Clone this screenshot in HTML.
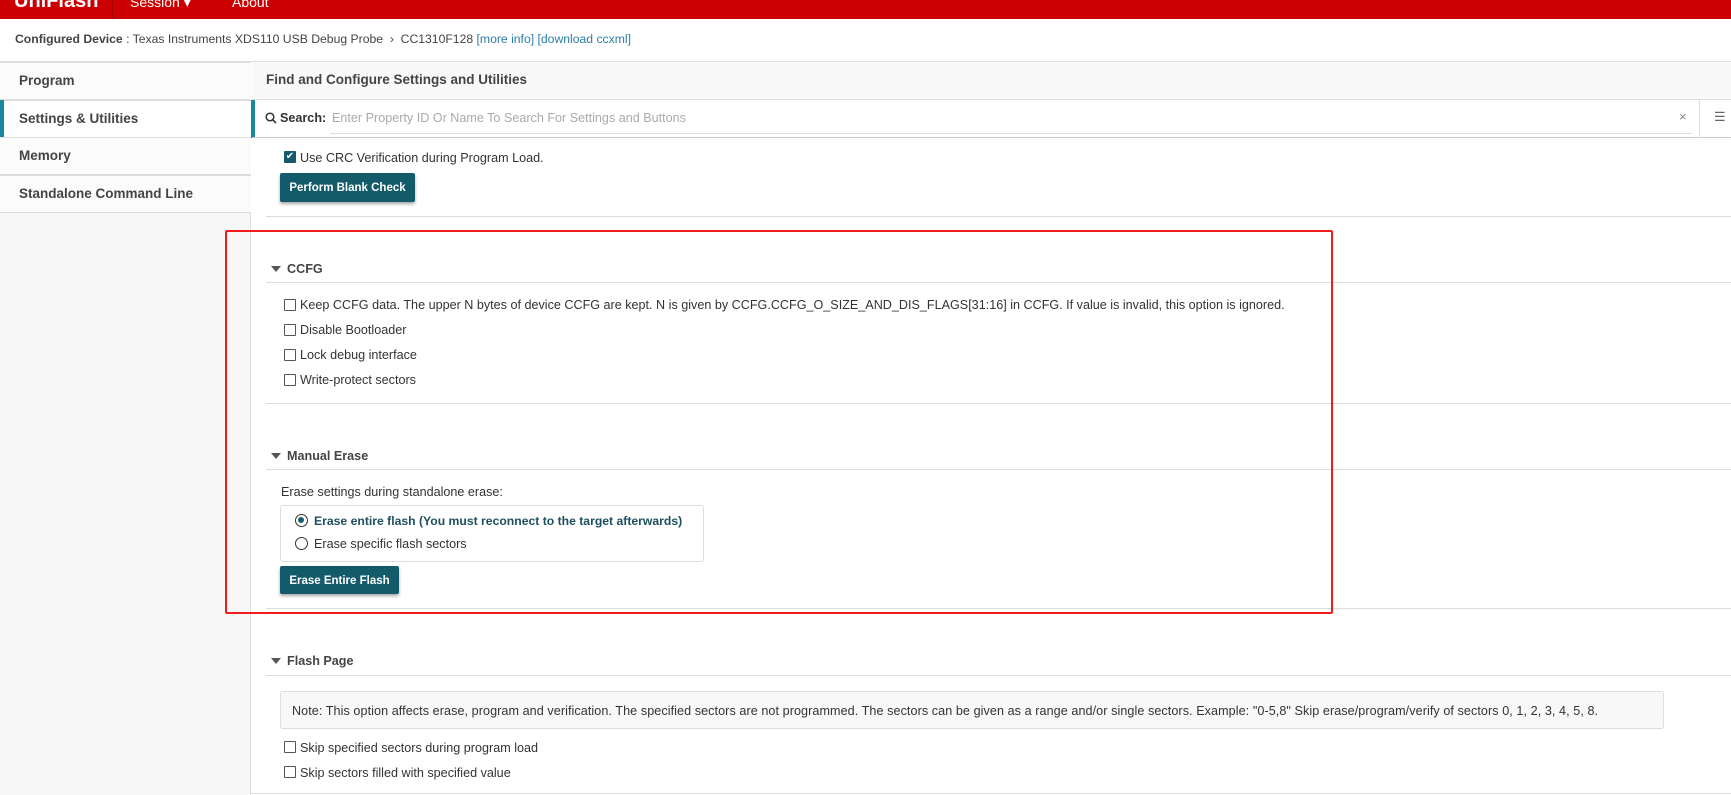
<!DOCTYPE html>
<html><head><meta charset="utf-8"><style>
*{box-sizing:border-box;margin:0;padding:0}
body{width:1731px;height:795px;overflow:hidden;background:#fff;font-family:"Liberation Sans",Arial,sans-serif;font-size:12.6px;color:#333;position:relative}
.a{position:absolute;white-space:nowrap}
.top{left:0;top:0;width:1731px;height:19px;background:#cc0000}
.side{left:0;top:62px;width:251px;height:733px;background:#f7f7f7;border-right:1px solid #ddd}
.row{left:0;width:251px;height:38px;background:#fbfbfb;border-bottom:1px solid #ddd;border-top:1px solid #ddd;padding:10px 0 0 19px;font-size:13.5px;font-weight:bold;color:#444}
.hr{height:1px;background:#ddd}
.cb{width:12px;height:12px;border:1px solid #555;border-radius:1px;background:#fff}
.btn{background:#135a6a;color:#fff;font-size:11.5px;font-weight:bold;border-radius:2px;box-shadow:0 2px 3px rgba(0,0,0,.35);text-align:center}
.h{font-size:12.6px;font-weight:bold;color:#444}
.tri{width:0;height:0;border-left:5px solid transparent;border-right:5px solid transparent;border-top:6px solid #555}
</style></head><body>
<div class="a top"></div>
<div class="a" style="left:14px;top:-10px;color:#fff;font-size:20px;font-weight:bold">UniFlash</div>
<div class="a" style="left:112px;top:0;width:1px;height:19px;background:#a00"></div>
<div class="a" style="left:130px;top:-6px;color:#fff;font-size:14px">Session ▾</div>
<div class="a" style="left:232px;top:-6px;color:#fff;font-size:14px">About</div>
<div class="a" style="left:15px;top:32px;font-size:12.2px;color:#444"><b>Configured Device</b> : Texas Instruments XDS110 USB Debug Probe &nbsp;›&nbsp; CC1310F128 <span style="color:#2a7fa8">[more info]</span> <span style="color:#2a7fa8">[download ccxml]</span></div>
<div class="a hr" style="left:0;top:61px;width:1731px"></div>
<div class="a side"></div>
<div class="a row" style="top:62px">Program</div>
<div class="a row" style="top:100px;background:#fff">Settings &amp; Utilities</div>
<div class="a" style="left:0;top:100px;width:4px;height:38px;background:#1a8a9a"></div>
<div class="a row" style="top:137px">Memory</div>
<div class="a row" style="top:175px">Standalone Command Line</div>
<div class="a" style="left:252px;top:62px;width:1479px;height:38px;background:#f9f9f9;border-bottom:1px solid #ddd"></div>
<div class="a" style="left:266px;top:72px;font-size:13.5px;font-weight:bold;color:#444">Find and Configure Settings and Utilities</div>
<div class="a" style="left:251px;top:100px;width:4px;height:38px;background:#1a8a9a"></div>
<div class="a" style="left:280px;top:128px;width:430px;height:8px;border:1px solid #ddd;border-top:none;border-radius:0 0 4px 4px"></div>
<div class="a" style="left:255px;top:101px;width:1444px;height:35px;background:#fff"></div>
<div class="a" style="left:252px;top:137px;width:1479px;height:1px;background:#ccc;box-shadow:0 2px 4px rgba(0,0,0,.08)"></div>
<svg class="a" style="left:265px;top:112px" width="12" height="12" viewBox="0 0 12 12"><circle cx="5" cy="5" r="3.8" fill="none" stroke="#333" stroke-width="1.5"/><line x1="7.8" y1="7.8" x2="11" y2="11" stroke="#333" stroke-width="1.6"/></svg>
<div class="a" style="left:280px;top:111px;font-weight:bold;color:#333">Search:</div>
<div class="a" style="left:332px;top:111px;color:#aaa">Enter Property ID Or Name To Search For Settings and Buttons</div>
<div class="a hr" style="left:330px;top:133px;width:1362px"></div>
<div class="a" style="left:1679px;top:109px;color:#888;font-size:13px">×</div>
<div class="a" style="left:1699px;top:100px;width:1px;height:38px;background:#ddd"></div>
<div class="a" style="left:1714px;top:109px;color:#666;font-size:13px">☰</div>
<div class="a cb" style="left:284px;top:151px;background:#135a6a;border-color:#135a6a;color:#fff;font-size:10px;line-height:10px;text-align:center">✔</div>
<div class="a" style="left:300px;top:151px">Use CRC Verification during Program Load.</div>
<div class="a btn" style="left:280px;top:173px;width:135px;height:29px;line-height:31px">Perform Blank Check</div>
<div class="a hr" style="left:266px;top:216px;width:1465px"></div>

<div class="a tri" style="left:271px;top:266px"></div>
<div class="a h" style="left:287px;top:262px">CCFG</div>
<div class="a hr" style="left:266px;top:282px;width:1465px"></div>
<div class="a cb" style="left:284px;top:299px"></div><div class="a" style="left:300px;top:298px">Keep CCFG data. The upper N bytes of device CCFG are kept. N is given by CCFG.CCFG_O_SIZE_AND_DIS_FLAGS[31:16] in CCFG. If value is invalid, this option is ignored.</div>
<div class="a cb" style="left:284px;top:324px"></div><div class="a" style="left:300px;top:323px">Disable Bootloader</div>
<div class="a cb" style="left:284px;top:349px"></div><div class="a" style="left:300px;top:348px">Lock debug interface</div>
<div class="a cb" style="left:284px;top:374px"></div><div class="a" style="left:300px;top:373px">Write-protect sectors</div>
<div class="a hr" style="left:266px;top:403px;width:1465px"></div>

<div class="a tri" style="left:271px;top:453px"></div>
<div class="a h" style="left:287px;top:449px">Manual Erase</div>
<div class="a hr" style="left:266px;top:469px;width:1465px"></div>
<div class="a" style="left:281px;top:485px">Erase settings during standalone erase:</div>
<div class="a" style="left:280px;top:505px;width:424px;height:57px;border:1px solid #ddd;border-radius:3px"></div>
<div class="a" style="left:295px;top:514px;width:13px;height:13px;border:1.5px solid #333;border-radius:50%"><div style="width:6px;height:6px;margin:2px;border-radius:50%;background:#135a6a"></div></div>
<div class="a" style="left:314px;top:514px;font-weight:bold;color:#1d4f5e;font-size:12.2px">Erase entire flash (You must reconnect to the target afterwards)</div>
<div class="a" style="left:295px;top:537px;width:13px;height:13px;border:1.5px solid #333;border-radius:50%"></div>
<div class="a" style="left:314px;top:537px">Erase specific flash sectors</div>
<div class="a btn" style="left:280px;top:566px;width:119px;height:28px;line-height:30px">Erase Entire Flash</div>
<div class="a hr" style="left:266px;top:608px;width:1465px"></div>

<div class="a" style="left:225px;top:230px;width:1108px;height:384px;border:2px solid #f21c1c;border-radius:2px"></div>

<div class="a tri" style="left:271px;top:658px"></div>
<div class="a h" style="left:287px;top:654px">Flash Page</div>
<div class="a hr" style="left:266px;top:675px;width:1465px"></div>
<div class="a" style="left:280px;top:691px;width:1384px;height:38px;background:#f8f8f8;border:1px solid #ddd;border-radius:3px;padding:12px 0 0 11px;white-space:nowrap;letter-spacing:0.07px">Note: This option affects erase, program and verification. The specified sectors are not programmed. The sectors can be given as a range and/or single sectors. Example: "0-5,8" Skip erase/program/verify of sectors 0, 1, 2, 3, 4, 5, 8.</div>
<div class="a cb" style="left:284px;top:741px"></div><div class="a" style="left:300px;top:741px">Skip specified sectors during program load</div>
<div class="a cb" style="left:284px;top:766px"></div><div class="a" style="left:300px;top:766px">Skip sectors filled with specified value</div>
<div class="a hr" style="left:251px;top:793px;width:1480px"></div>
</body></html>
